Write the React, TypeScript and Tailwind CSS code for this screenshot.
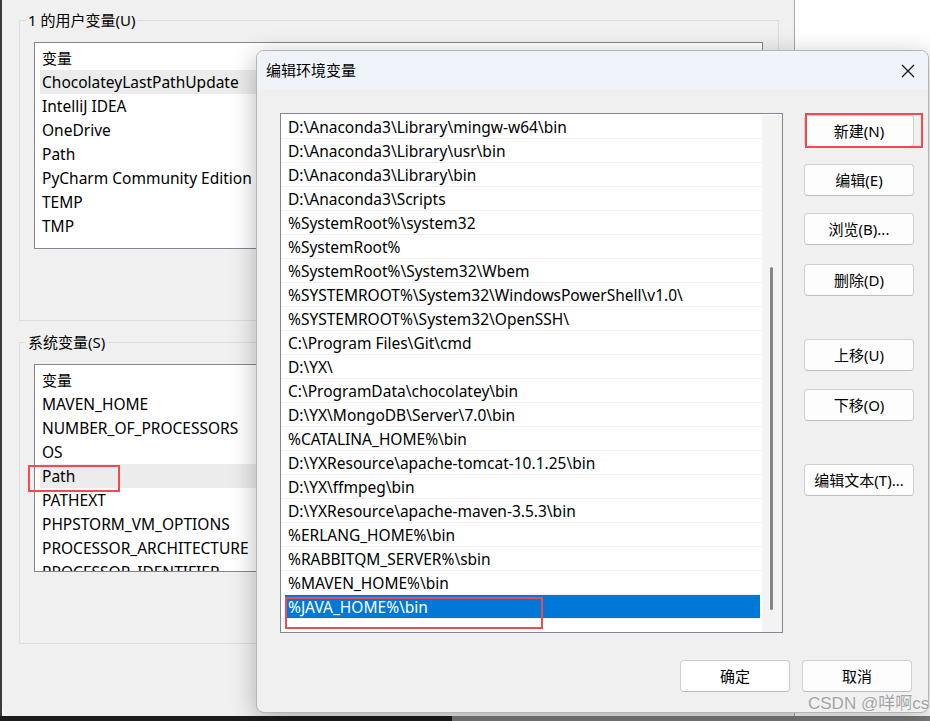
import React from 'react';

const userVars = [
    'ChocolateyLastPathUpdate',
    'IntelliJ IDEA',
    'OneDrive',
    'Path',
    'PyCharm Community Edition',
    'TEMP',
    'TMP',
];

const systemVars = [
    'MAVEN_HOME',
    'NUMBER_OF_PROCESSORS',
    'OS',
    'Path',
    'PATHEXT',
    'PHPSTORM_VM_OPTIONS',
    'PROCESSOR_ARCHITECTURE',
    'PROCESSOR_IDENTIFIER',
];

const paths = [
    'D:\\Anaconda3\\Library\\mingw-w64\\bin',
    'D:\\Anaconda3\\Library\\usr\\bin',
    'D:\\Anaconda3\\Library\\bin',
    'D:\\Anaconda3\\Scripts',
    '%SystemRoot%\\system32',
    '%SystemRoot%',
    '%SystemRoot%\\System32\\Wbem',
    '%SYSTEMROOT%\\System32\\WindowsPowerShell\\v1.0\\',
    '%SYSTEMROOT%\\System32\\OpenSSH\\',
    'C:\\Program Files\\Git\\cmd',
    'D:\\YX\\',
    'C:\\ProgramData\\chocolatey\\bin',
    'D:\\YX\\MongoDB\\Server\\7.0\\bin',
    '%CATALINA_HOME%\\bin',
    'D:\\YXResource\\apache-tomcat-10.1.25\\bin',
    'D:\\YX\\ffmpeg\\bin',
    'D:\\YXResource\\apache-maven-3.5.3\\bin',
    '%ERLANG_HOME%\\bin',
    '%RABBITQM_SERVER%\\sbin',
    '%MAVEN_HOME%\\bin',
    '%JAVA_HOME%\\bin',
];

const sideButtons = [
    { label: '新建(N)', mt: 'mt-0' },
    { label: '编辑(E)', mt: 'mt-[17px]' },
    { label: '浏览(B)...', mt: 'mt-[17px]' },
    { label: '删除(D)', mt: 'mt-[19px]' },
    { label: '上移(U)', mt: 'mt-[43px]' },
    { label: '下移(O)', mt: 'mt-[18px]' },
    { label: '编辑文本(T)...', mt: 'mt-[43px]' },
];

function VarList({ items, highlight, height }: { items: string[]; highlight: string; height: string }) {
    return (
        <div
            className={`ml-[14px] mt-[12px] w-[729px] overflow-hidden border border-[#828790] bg-white pt-[3px] text-[15.5px] ${height}`}
        >
            <div className="ml-[5px] h-[24px] pl-[2px] text-[15px] leading-[24px]">变量</div>
            {items.map((name) => (
                <div
                    key={name}
                    className={`ml-[5px] h-[24px] whitespace-nowrap pl-[2px] leading-[24px] ${name === highlight ? 'bg-[#ececec]' : ''}`}
                >
                    {name}
                </div>
            ))}
        </div>
    );
}

function WinButton({ label, className = '' }: { label: string; className?: string }) {
    return (
        <button
            type="button"
            className={`h-[32px] w-[110px] rounded-[4px] border border-[#d0d0d0] border-b-[#bcbcbc] bg-[#fdfdfd] text-[15px] leading-[30px] text-black ${className}`}
        >
            {label}
        </button>
    );
}

export default function App() {
    return (
        <div className="relative h-[721px] w-[930px] overflow-hidden bg-white font-['Noto_Sans','Noto_Sans_CJK_SC',sans-serif] text-[15px] text-black">
            {/* strip of another window at the far left */}
            <div className="absolute left-0 top-0 h-full w-[2px] bg-[#3a3a3a]" />

            {/* background window: 环境变量 */}
            <div className="absolute left-[2px] top-0 h-[716px] w-[793px] overflow-hidden rounded-bl-[8px] border-r border-[#a9a9a9] bg-[#f0f0f0]">
                <fieldset className="ml-[17px] mt-[10px] h-[311px] w-[760px] border border-[#dcdcdc]">
                    <legend className="ml-[6px] px-[2px] leading-[20px]">1 的用户变量(U)</legend>
                    <VarList items={userVars} highlight="ChocolateyLastPathUpdate" height="h-[207px]" />
                </fieldset>
                <fieldset className="ml-[17px] mt-[11px] h-[312px] w-[760px] border border-[#dcdcdc]">
                    <legend className="ml-[6px] px-[2px] leading-[20px]">系统变量(S)</legend>
                    <VarList items={systemVars} highlight="Path" height="h-[208px]" />
                </fieldset>
            </div>

            {/* taskbar edge */}
            <div className="absolute bottom-0 left-0 flex h-[5px] w-full">
                <div className="w-[452px] bg-[#1c1c1c]" />
                <div className="flex-1 bg-[#7d7d7d]" />
            </div>

            {/* dialog: 编辑环境变量 */}
            <div className="absolute left-[256px] top-[50px] flex h-[663px] w-[673px] flex-col overflow-hidden rounded-[8px] border border-[#b5b5b5] bg-[#f0f0f0] shadow-[0_6px_26px_rgba(0,0,0,0.28)]">
                <div className="flex h-[38px] shrink-0 items-center justify-between bg-[#eef4f9] pl-[9px] pr-[13px]">
                    <span>编辑环境变量</span>
                    <svg width="14" height="14" viewBox="0 0 14 14" className="mt-px">
                        <path d="M1 1L13 13M13 1L1 13" stroke="#1a1a1a" strokeWidth="1.3" fill="none" />
                    </svg>
                </div>

                <div className="flex pl-[23px] pt-[24px]">
                    <div className="flex h-[520px] w-[503px] border border-[#828790] bg-white pt-px text-[15.5px]">
                        <div className="flex-1">
                            {paths.map((p, i) => (
                                <div key={p} className="h-[24px] border-b border-[#f0f0f0]">
                                    {i === paths.length - 1 ? (
                                        <div className="ml-[4px] mr-[2px] h-[23px] whitespace-nowrap bg-[#0078d7] pl-[3px] pt-px leading-[23px] text-white">
                                            {p}
                                        </div>
                                    ) : (
                                        <div className="h-[23px] whitespace-nowrap pl-[7px] pt-px leading-[23px]">{p}</div>
                                    )}
                                </div>
                            ))}
                        </div>
                        <div className="w-[20px] bg-[#f3f3f3] pl-[8px] pt-[152px]">
                            <div className="h-[343px] w-[3px] rounded-full bg-[#858585]" />
                        </div>
                    </div>

                    <div className="ml-[21px] flex flex-col pt-[2px]">
                        {sideButtons.map((b) => (
                            <WinButton key={b.label} label={b.label} className={b.mt} />
                        ))}
                    </div>
                </div>

                <div className="mt-[27px] flex justify-end gap-[12px] pr-[16px]">
                    <WinButton label="确定" className="border-[#0067c0] border-b-[#0067c0] bg-white" />
                    <WinButton label="取消" />
                </div>
            </div>

            {/* red annotation boxes */}
            <div className="absolute left-[805px] top-[113px] h-[35px] w-[118px] border-2 border-[#ef4b50]" />
            <div className="absolute left-[28px] top-[465px] h-[27px] w-[92px] border-2 border-[#ef4b50]" />
            <div className="absolute left-[285px] top-[597px] h-[32px] w-[258px] border-2 border-[#ef4b50]" />

            {/* watermark */}
            <div className="absolute left-[808px] top-[694px] whitespace-nowrap font-['Liberation_Sans','Noto_Sans_CJK_SC',sans-serif] text-[17px] leading-[20px] text-[#a3a3a3] [text-shadow:0_0_2px_white]">
                CSDN @咩啊cs
            </div>
        </div>
    );
}
